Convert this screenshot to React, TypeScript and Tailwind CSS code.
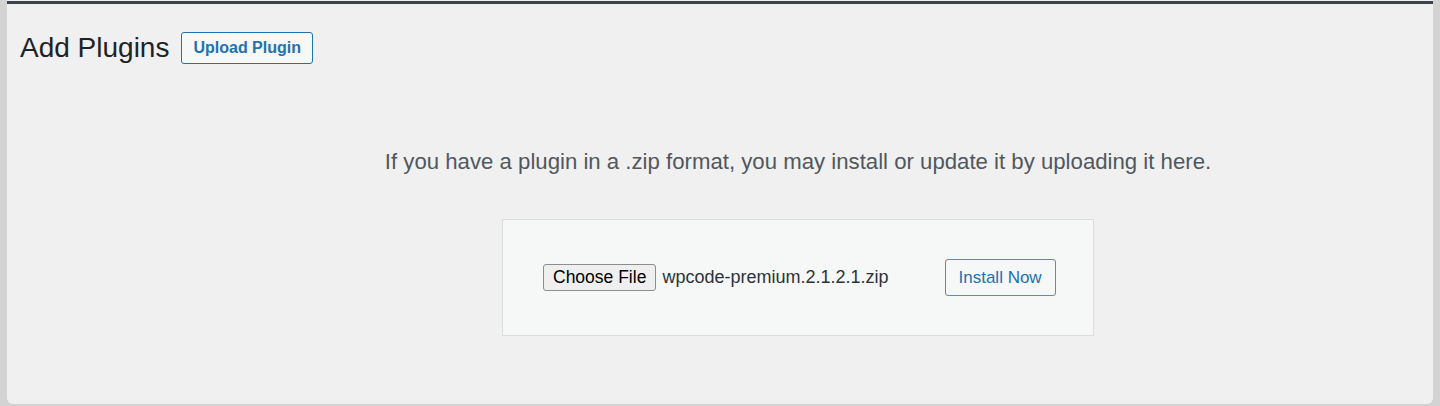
import React from "react";

const App: React.FC = () => {
  return (
    <div
      className="h-[406px] w-[1440px] bg-[#d3d3d3] pl-[7px] pr-[7px] pb-[2px] overflow-hidden"
      style={{ fontFamily: '"Liberation Sans", Arial, sans-serif' }}
    >
      <div className="flex h-full flex-col rounded-b-[6px] bg-[#f0f0f1]">
        <div className="h-[3px] bg-[#3c434a] mt-px" />
        <div className="flex items-center gap-[12px] pl-[13px] pt-[28px]">
          <h1 className="text-[28px] font-normal leading-none text-[#1d2327]">
            Add Plugins
          </h1>
          <button className="h-[32px] rounded-[3px] border border-[#2271b1] bg-[#f6f7f7] px-[11px] text-[16px] font-bold text-[#2271b1]">
            Upload Plugin
          </button>
        </div>
        <div className="flex flex-col items-center pl-[156px] pt-[87px]">
          <p className="text-[22.2px] leading-none text-[#50575e]">
            If you have a plugin in a .zip format, you may install or update it by uploading it here.
          </p>
          <div className="mt-[46px] flex h-[117px] w-[592px] items-center border border-[#dcdcde] bg-[#f6f7f7] pl-[40px]">
            <button className="h-[27px] rounded-[3px] border border-[#8d8d8d] bg-[#efefef] px-[9px] text-[17.5px] leading-none text-black">
              Choose File
            </button>
            <span className="ml-[6px] text-[18px] text-[#2c3338]">
              wpcode-premium.2.1.2.1.zip
            </span>
            <button className="ml-[56px] h-[37px] rounded-[3px] border border-[#4b8fd0] bg-[#f6f7f7] px-[13px] text-[17px] text-[#2271b1]">
              Install Now
            </button>
          </div>
        </div>
      </div>
    </div>
  );
};

export default App;
